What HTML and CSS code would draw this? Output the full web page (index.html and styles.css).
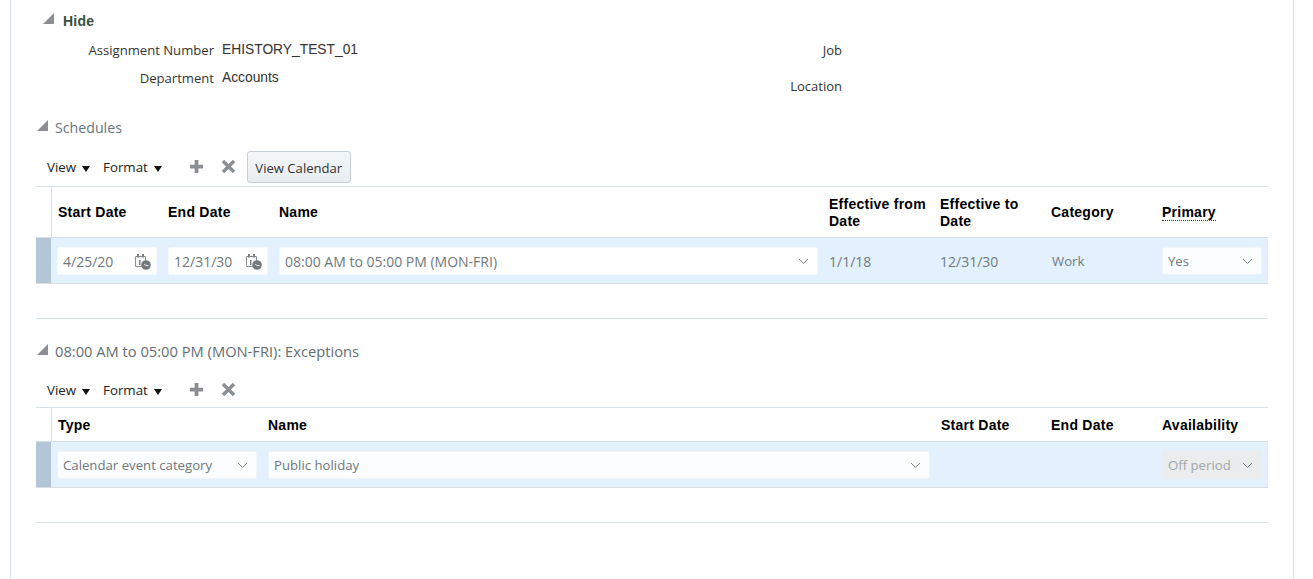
FILE: index.html
```html
<!DOCTYPE html>
<html lang="en">
<head>
<meta charset="utf-8">
<title>Schedules</title>
<link rel="stylesheet" href="styles.css">
</head>
<body>
<svg class="defs" width="0" height="0" aria-hidden="true">
  <symbol id="tri" viewBox="0 0 12 12"><path d="M12 0V12H0Z"/></symbol>
  <symbol id="plus" viewBox="0 0 16 16"><path d="M6 1h4v5h5v4h-5v5H6v-5H1V6h5Z"/></symbol>
  <symbol id="cross" viewBox="0 0 16 16"><path d="M3.4.8 8 5.4 12.6.8l2.6 2.6L10.600 8l4.600 4.600-2.600 2.600L8 10.600l-4.600 4.600-2.600-2.600L5.400 8 .8 3.400Z"/></symbol>
  <symbol id="chev" viewBox="0 0 11 7"><path d="M1 1l4.500 4.500L10 1" fill="none" stroke="currentColor" stroke-width="1"/></symbol>
  <symbol id="cal" viewBox="0 0 17 17">
    <path d="M1.500 3.500h10v10h-10Z" fill="#fff" stroke="#8a8f94"/>
    <path d="M3 1h2v3.500H3ZM8 1h2v3.500H8Z" fill="#7c8186"/>
    <path d="M5 7h1.500v5H5Z" fill="#7c8186"/>
    <circle cx="12" cy="12" r="4.800" fill="#73787d"/>
    <path d="M10 11l2 1.500h2.500" fill="none" stroke="#e8e8e8"/>
  </symbol>
</svg>
<main class="panel">
  <div class="hide-row">
    <svg class="tri"><use href="#tri"/></svg>
    <span class="hide-label">Hide</span>
  </div>
  <div class="info">
    <div class="info-left">
      <div class="pair"><span class="lbl">Assignment Number</span><span class="val">EHISTORY_TEST_01</span></div>
      <div class="pair"><span class="lbl">Department</span><span class="val">Accounts</span></div>
    </div>
    <div class="info-right">
      <div class="lbl">Job</div>
      <div class="lbl">Location</div>
    </div>
  </div>

  <section class="sched">
    <h2 class="title"><svg class="tri"><use href="#tri"/></svg>Schedules</h2>
    <div class="toolbar">
      <span class="menu">View<i class="caret"></i></span>
      <span class="menu">Format<i class="caret"></i></span>
      <svg class="ico plus"><use href="#plus"/></svg>
      <svg class="ico cross"><use href="#cross"/></svg>
      <button class="btn" type="button">View Calendar</button>
    </div>
    <div class="tbl">
      <div class="head cols-a">
        <div class="corner"></div>
        <div class="th">Start Date</div>
        <div class="th">End Date</div>
        <div class="th">Name</div>
        <div class="th two">Effective from Date</div>
        <div class="th two">Effective to Date</div>
        <div class="th">Category</div>
        <div class="th"><span class="dotted">Primary</span></div>
      </div>
      <div class="row cols-a">
        <div class="sel"></div>
        <div class="td"><div class="field white num"><span>4/25/20</span><svg class="cal"><use href="#cal"/></svg></div></div>
        <div class="td"><div class="field white num"><span>12/31/30</span><svg class="cal"><use href="#cal"/></svg></div></div>
        <div class="td"><div class="field white num"><span>08:00 AM to 05:00 PM (MON-FRI)</span><svg class="chev"><use href="#chev"/></svg></div></div>
        <div class="td plain num">1/1/18</div>
        <div class="td plain num">12/31/30</div>
        <div class="td plain work">Work</div>
        <div class="td"><div class="field"><span>Yes</span><svg class="chev"><use href="#chev"/></svg></div></div>
      </div>
    </div>
    <div class="rule"></div>
  </section>

  <section class="exc">
    <h2 class="title wide"><svg class="tri"><use href="#tri"/></svg>08:00 AM to 05:00 PM (MON-FRI): Exceptions</h2>
    <div class="toolbar short">
      <span class="menu">View<i class="caret"></i></span>
      <span class="menu">Format<i class="caret"></i></span>
      <svg class="ico plus"><use href="#plus"/></svg>
      <svg class="ico cross"><use href="#cross"/></svg>
    </div>
    <div class="tbl">
      <div class="head short cols-b">
        <div class="corner"></div>
        <div class="th">Type</div>
        <div class="th">Name</div>
        <div class="th">Start Date</div>
        <div class="th">End Date</div>
        <div class="th">Availability</div>
      </div>
      <div class="row cols-b">
        <div class="sel"></div>
        <div class="td"><div class="field"><span>Calendar event category</span><svg class="chev"><use href="#chev"/></svg></div></div>
        <div class="td"><div class="field"><span>Public holiday</span><svg class="chev"><use href="#chev"/></svg></div></div>
        <div class="td plain"></div>
        <div class="td plain"></div>
        <div class="td"><div class="field off"><span>Off period</span><svg class="chev"><use href="#chev"/></svg></div></div>
      </div>
    </div>
    <div class="rule"></div>
  </section>
</main>
</body>
</html>
```
FILE: styles.css
```css
* { box-sizing: border-box; }
html, body { margin: 0; height: 100%; overflow: hidden; background: #fff; }
body { font-family: "Open Sans", "Noto Sans", sans-serif; font-size: 13px; color: #333; }
.defs { position: absolute; }

.panel {
  margin-left: 10px;
  width: 1284px;
  height: 579px;
  padding: 0 25px;
  border-left: 1px solid #d6dfe6;
  border-right: 1px solid #d6dfe6;
}

.hide-row { height: 41px; padding: 13px 0 0 7px; display: flex; align-items: flex-start; }
.hide-row .tri { margin: 0 9px 0 0; }
.tri { width: 11px; height: 11px; fill: #8b8f93; flex: none; }
.hide-label { font: bold 14px/15px "Liberation Sans", sans-serif; color: #35503f; letter-spacing: .2px; margin-top: 1px; }

.info { display: flex; height: 63px; }
.info-left { flex: 0 0 400px; }
.pair { display: flex; height: 28px; align-items: flex-start; }
.pair .lbl { width: 178px; text-align: right; line-height: 18px; font-size: 13.1px; }
.pair .val { margin: 1px 0 0 8px; font: 13.8px/16px "Liberation Sans", sans-serif; color: #333; }
.lbl { color: #333; font-size: 13px; }
.info-right { flex: 0 0 406px; text-align: right; }
.info-right .lbl { line-height: 18px; height: 36px; }

.sched { padding-top: 15px; }
.title {
  margin: 0;
  height: 18px;
  display: flex;
  align-items: center;
  font-weight: 400;
  font-size: 14.2px;
  color: #66757f;
  line-height: 18px;
}
.title.wide { font-size: 14.7px; color: #636e73; }
.title .tri { margin: -6px 7px 0 1px; }
.title.wide .tri { margin-top: -3px; }

.toolbar { height: 43px; display: flex; align-items: flex-end; padding: 0 0 3px 11px; margin-top: 6px; }
.toolbar.short { height: 47px; margin-top: 0; }
.menu { height: 27px; line-height: 27px; color: #222; display: inline-flex; align-items: center; margin: 0 13px 2px 0; font-size: 13.3px; }
.short .menu { margin-bottom: 0; }
.caret { display: inline-block; margin-left: 6px; margin-top: 2px; border: 4.500px solid transparent; border-top: 6px solid #111; border-bottom: 0; }
.ico { width: 15px; height: 15px; fill: #8b8f93; margin-bottom: 9px; flex: none; }
.short .ico { margin-bottom: 7px; }
.plus { margin-left: 14px; margin-right: 17px; }
.btn {
  margin-left: 11px;
  width: 104px;
  height: 32px;
  padding: 1px 0 0;
  font: 13.1px "Open Sans", sans-serif;
  color: #333;
  background: linear-gradient(#f3f6f8, #e8edf1);
  border: 1px solid #c4ced7;
  border-radius: 3px;
}

.tbl { border-top: 1px solid #d6dfe6; }
.cols-a { display: grid; grid-template-columns: 15px 111px 111px 550px 111px 111px 111px 1fr; }
.cols-b { display: grid; grid-template-columns: 15px 211px 673px 110px 111px 1fr; }
.head { height: 51px; border-bottom: 1px solid #d6dfe6; }
.head.short { height: 34px; }
.corner { border-right: 1px solid #d6dfe6; margin-right: -1px; }
.th {
  font: bold 14px/17px "Liberation Sans", sans-serif;
  letter-spacing: .25px;
  color: #000;
  padding: 0 6px;
  align-self: center;
}
.th.two { padding-top: 2px; }
.corner + .th { padding-left: 7px; }
.head.short .th { padding-top: 1px; }
.dotted { border-bottom: 1px dotted #333; }

.row { height: 46px; background: #e3f0fd; border-bottom: 1px solid #d9dde2; align-items: center; }
.sel { background: #b3c6d7; height: 100%; }
.td { padding: 0 5px 0 6px; color: #707a82; font-size: 13.2px; }
.td:last-child { padding-right: 6px; }
.num { font-size: 14px; }
.plain { padding-top: 1px; }
.work { padding-left: 7px; }
.field {
  height: 28px;
  padding: 1px 6px 0 5px;
  display: flex;
  align-items: center;
  justify-content: space-between;
  background: #fbfdfe;
  border: 1px solid #eef4fa;
  border-radius: 2px;
  color: #70777d;
  white-space: nowrap;
}
.field.white { background: #fff; border-color: #f6f9fb; }
.field.off { background: #ebeced; border-color: #ebeced; color: #a3a7ab; }
.cal { width: 17px; height: 17px; margin-right: -1px; flex: none; margin-top: 1px; }
.chev { width: 11px; height: 7px; color: #7c8186; flex: none; margin-right: 2px; }

.rule { height: 35px; border-bottom: 1px solid #d6dfe6; }
.exc { padding-top: 23px; }
```
